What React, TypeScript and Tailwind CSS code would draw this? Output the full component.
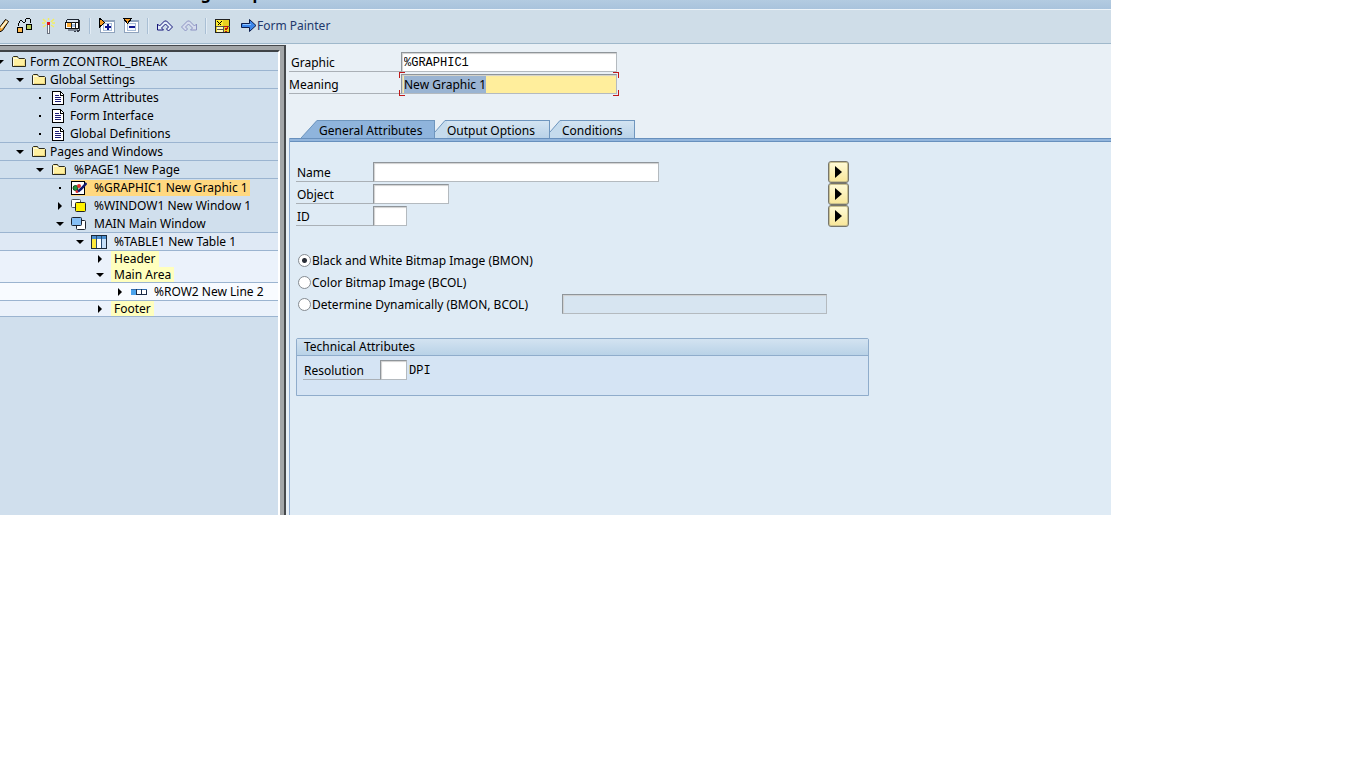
import React, { useEffect, useRef, useState } from 'react';
import clsx from 'clsx';

const PencilIcon = () => (
  <svg width="16" height="16" viewBox="0 0 16 16">
    <path d="M5.500 14.500l1-5 6-8 3 2-6 9z" fill="#f0a030" stroke="#000" />
    <path d="M8 10l6-7" stroke="#fff2c8" strokeWidth="2" />
  </svg>
);

const StructureIcon = () => (
  <svg width="16" height="16" viewBox="0 0 16 16" shapeRendering="crispEdges">
    <path d="M1 5h1v3H1zM2 3h1v2H2zM3 2h2v1H3zM5 3h1v1H5zM6 4h2v1H6zM8 1h1v3H8zM9 0h4v1H9zM13 1h1v4h-1z" fill="#000" />
    <rect x="0.500" y="9.500" width="5" height="5" fill="#ffb84d" stroke="#000" />
    <rect x="9.500" y="6.500" width="5" height="5" fill="#b5cc5c" stroke="#000" />
  </svg>
);

const WandIcon = () => (
  <svg width="16" height="16" viewBox="0 0 16 16">
    <path d="M2 1l3 3M13 1l-3 3M2 9l3-2M13 9l-3-2M1 5h3M11 5h3M7.500 0v2" stroke="#f4ee60" strokeWidth="1.500" />
    <rect x="6.500" y="6.500" width="2" height="9" fill="#fff" stroke="#6b7280" />
    <rect x="6" y="4" width="3" height="3" fill="#dd1515" />
  </svg>
);

const PrintPreviewIcon = () => (
  <svg width="16" height="16" viewBox="0 0 16 16" shapeRendering="crispEdges">
    <path d="M2.500 1.500h11v3h-12v-2z" fill="#dce6f2" stroke="#1c2430" />
    <rect x="0.500" y="4.500" width="13" height="6" fill="#fff" stroke="#111" />
    <rect x="2" y="5" width="4" height="4" fill="#ffad33" />
    <path d="M6 4h1v6H6zM10 4h1v6h-1z" fill="#222" />
    <rect x="7" y="6" width="3" height="3" fill="#a9c5e8" />
    <path d="M14 2h1v11h-1z" fill="#333a46" />
    <path d="M3 11h10v2H3z" fill="#7c8796" />
    <path d="M9 13h2v1H9zM12 12h2v2h-2z" fill="#333a46" />
  </svg>
);

const ExpandIcon = ({ collapse = false }: { collapse?: boolean }) => (
  <svg width="16" height="16" viewBox="0 0 16 16" shapeRendering="crispEdges">
    <rect x="1.500" y="2.500" width="14" height="12" fill="#fff" stroke="#8fa3bd" />
    <path d="M2 3h13" stroke="#8fa3bd" strokeWidth="2" />
    <rect x="4.500" y="5.500" width="8" height="7" fill="#f5f9ff" stroke="#a8bdd8" />
    {collapse ? (
      <path d="M0.500 0.500h8l-4 5z" fill="#f59a23" stroke="#000" strokeWidth="1" />
    ) : (
      <path d="M0.500 0v9l5-4.500z" fill="#f59a23" stroke="#000" strokeWidth="1" />
    )}
    <path d={collapse ? 'M6 9h6' : 'M6 9h6M9 6v6'} stroke="#101890" strokeWidth="2" />
  </svg>
);

const UndoIcon = ({ redo = false }: { redo?: boolean }) => (
  <svg width="16" height="16" viewBox="0 0 16 16">
    <path
      d={redo ? 'M15.500 6v6h-6l2-2-4-4-3 3 2 2-2 2-4-4 6-6h2l5 5z' : 'M0.500 6v6h6l-2-2 4-4 3 3-2 2 2 2 4-4-6-6h-2l-5 5z'}
      fill={redo ? '#d5dced' : '#e3edf8'}
      stroke={redo ? '#8c92c2' : '#141478'}
    />
  </svg>
);

const HelpTableIcon = () => (
  <svg width="16" height="16" viewBox="0 0 16 16" shapeRendering="crispEdges">
    <rect x="0.500" y="1.500" width="14" height="13" fill="#e8d020" stroke="#222" />
    <rect x="1" y="2" width="7" height="6" fill="#ffec30" />
    <path d="M2 3h1v1H2zM6 3h1v1H6zM3 4h1v1H3zM5 4h1v1H5zM4 5h1v1H4zM3 6h1v1H3zM5 6h1v1H5z" fill="#000" />
    <path d="M1 8h14v1H1zM8 8h1v6H8z" fill="#555" />
    <path d="M2 9h6v5H2z" fill="#fff8c0" />
    <path d="M2 11h6v1H2z" fill="#555" />
    <path d="M9 8h4v1H9zM12 9h1v2h-1zM10 10h2v2h-2zM10 13h2v1h-2z" fill="#c01010" />
  </svg>
);

const ArrowIcon = () => (
  <svg width="16" height="16" viewBox="0 0 16 16">
    <path d="M0.500 5.500h8v-4l6.500 6-6.500 6v-4h-8z" fill="#3c86ea" stroke="#0b1c4c" />
    <path d="M2 6.500h8" stroke="#8fc4ff" />
  </svg>
);

const FolderIcon = () => (
  <svg width="16" height="16" viewBox="0 0 16 16">
    <path d="M1.500 12.500v-9l1-1h4l1 2h6l1 1v7z" fill="#fff0a0" stroke="#2a2a20" />
    <path d="M2.500 4.500h5M2.500 4v8" stroke="#fffbe0" />
    <path d="M3 11.500h10.500V6" fill="none" stroke="#ecd67c" />
  </svg>
);

const DocIcon = () => (
  <svg width="16" height="16" viewBox="0 0 16 16" shapeRendering="crispEdges">
    <path d="M1.500 1.500h8l3 3v10h-11z" fill="#fff" stroke="#000" />
    <path d="M9.500 1v4H13" fill="none" stroke="#000" />
    <path d="M4 5.500h4M4 7.500h6M4 9.500h6M4 11.500h6" stroke="#1c1c78" />
  </svg>
);

const GraphicIcon = () => (
  <svg width="16" height="16" viewBox="0 0 16 16">
    <rect x="0.500" y="1.500" width="13" height="13" fill="#fff" stroke="#000" />
    <circle cx="4.500" cy="8" r="2.500" fill="#24943c" stroke="#114418" />
    <circle cx="8" cy="6" r="2" fill="#e03030" />
    <circle cx="6" cy="11.500" r="1.500" fill="#e03030" />
    <path d="M15.500 3l-5 5.500-3.500 3" stroke="#10186c" strokeWidth="2.500" fill="none" />
  </svg>
);

const WindowIcon = ({ main = false }: { main?: boolean }) => (
  <svg width="16" height="16" viewBox="0 0 16 16">
    {main ? (
      <>
        <rect x="5.500" y="4.500" width="9" height="9" rx="1" fill="#fff" stroke="#1d2430" />
        <rect x="0.500" y="1.500" width="10" height="8" rx="1" fill="#86bff5" stroke="#1d2430" />
      </>
    ) : (
      <>
        <rect x="0.500" y="1.500" width="9" height="8" rx="1" fill="#fff" stroke="#4a5560" />
        <rect x="4.500" y="4.500" width="10" height="9" rx="1" fill="#fff200" stroke="#222" />
      </>
    )}
  </svg>
);

const TableIcon = () => (
  <svg width="16" height="16" viewBox="0 0 16 16" shapeRendering="crispEdges">
    <rect x="0.500" y="1.500" width="15" height="13" fill="#fff" stroke="#1c2838" />
    <rect x="1" y="2" width="14" height="3" fill="#4a8fd0" />
    <rect x="1" y="5" width="4" height="9" fill="#ffe83c" />
    <rect x="11" y="5" width="4" height="9" fill="#c8e0f8" />
    <path d="M5.500 2v12M10.500 2v12" stroke="#2a4a70" />
  </svg>
);

const LineIcon = () => (
  <svg width="16" height="16" viewBox="0 0 16 16" shapeRendering="crispEdges">
    <rect x="0.500" y="5.500" width="15" height="5" fill="#fff" stroke="#1c2c48" />
    <rect x="0" y="5" width="5" height="6" fill="#4ca4ec" />
    <path d="M0 5h16v1H0z" fill="#3470b0" />
    <path d="M5.500 5v6M10.500 5v6" stroke="#1c2c48" />
  </svg>
);

type Marker = 'open' | 'closed' | 'leaf';

interface TreeNode {
  label: string;
  indent: string;
  marker: Marker;
  icon?: React.ReactNode;
  wide?: boolean;
  selected?: boolean;
  area?: boolean;
  row?: string;
}

const nodes: TreeNode[] = [
  { label: 'Form ZCONTROL_BREAK', indent: 'pl-0', marker: 'open', icon: <FolderIcon />, row: 'border-b' },
  { label: 'Global Settings', indent: 'pl-5', marker: 'open', icon: <FolderIcon />, row: 'border-b' },
  { label: 'Form Attributes', indent: 'pl-10', marker: 'leaf', icon: <DocIcon /> },
  { label: 'Form Interface', indent: 'pl-10', marker: 'leaf', icon: <DocIcon /> },
  { label: 'Global Definitions', indent: 'pl-10', marker: 'leaf', icon: <DocIcon />, row: 'border-b' },
  { label: 'Pages and Windows', indent: 'pl-5', marker: 'open', icon: <FolderIcon />, row: 'border-b' },
  { label: '%PAGE1 New Page', indent: 'pl-10', marker: 'open', icon: <FolderIcon />, wide: true, row: 'border-b' },
  { label: '%GRAPHIC1 New Graphic 1', indent: 'pl-15', marker: 'leaf', icon: <GraphicIcon />, wide: true, selected: true },
  { label: '%WINDOW1 New Window 1', indent: 'pl-15', marker: 'closed', icon: <WindowIcon />, wide: true },
  { label: 'MAIN Main Window', indent: 'pl-15', marker: 'open', icon: <WindowIcon main />, wide: true, row: 'border-b' },
  { label: '%TABLE1 New Table 1', indent: 'pl-20', marker: 'open', icon: <TableIcon />, wide: true, row: 'border-b bg-[#dfe9f5]' },
  { label: 'Header', indent: 'pl-25', marker: 'closed', area: true, row: 'bg-[#ebf2fb]' },
  { label: 'Main Area', indent: 'pl-25', marker: 'open', area: true, row: 'border-b bg-[#ebf2fb]' },
  { label: '%ROW2 New Line 2', indent: 'pl-30', marker: 'closed', icon: <LineIcon />, wide: true, row: 'border-b bg-[#f8fbff]' },
  { label: 'Footer', indent: 'pl-25', marker: 'closed', area: true, row: 'border-b bg-[#ebf2fb]' },
];

const markerPaths: Record<Marker, string> = {
  open: 'M0 2h8L4 6z',
  closed: 'M2 0l4 4-4 4z',
  leaf: 'M3 3h2v2H3z',
};

const TreeRow = ({ node }: { node: TreeNode }) => (
  <li className={clsx('flex items-center border-[#9bb4d0]', node.area ? 'h-4' : 'h-[18px]', node.indent, node.row)}>
    <svg className="-ml-1 mr-[7px] shrink-0" width="8" height="8" viewBox="0 0 8 8">
      <path d={markerPaths[node.marker]} fill="#000" />
    </svg>
    <span
      className={clsx(
        'flex items-center whitespace-nowrap',
        node.area && 'h-full bg-[#ffffbe] pr-[3px]',
        node.selected && 'h-4 bg-[#ffd880] pr-0.5',
      )}
    >
      {node.icon}
      <span className={node.wide ? 'pl-[7px]' : 'pl-[3px]'}>{node.label}</span>
    </span>
  </li>
);

const Separator = () => <span className="h-4 w-0.5 border-l border-[#a9bfd4] bg-[#e2ecf5]" />;

const field =
  'h-5 border border-[#b4babf] border-t-[#8f959a] border-l-[#8f959a] px-0.5 shadow-[inset_1px_1px_1px_#d0d0d0] outline-none';
const caption = 'flex h-5 shrink-0 items-center border-b border-[#aab0b6] pt-0.5';
const mono = "font-['Liberation_Mono',monospace] pt-0.5";

const MoreButton = ({ label }: { label: string }) => (
  <button
    aria-label={label}
    className="ml-auto flex h-[22px] w-[21px] items-center justify-center rounded-[3px] border border-[#77766c] bg-linear-to-b from-[#fffbd8] to-[#f8e698] shadow-[inset_0_0_0_1px_#c9c08e]"
  >
    <svg width="7" height="12" viewBox="0 0 7 12">
      <path d="M0 0l7 6-7 6z" fill="#000" />
    </svg>
  </button>
);

const attributes = [
  { id: 'name', label: 'Name', width: 'w-[286px]' },
  { id: 'object', label: 'Object', width: 'w-[76px]' },
  { id: 'gid', label: 'ID', width: 'w-[34px]' },
];

const bitmapTypes = ['Black and White Bitmap Image (BMON)', 'Color Bitmap Image (BCOL)', 'Determine Dynamically (BMON, BCOL)'];

const tabs = [
  { label: 'General Attributes', width: 'w-[116px]' },
  { label: 'Output Options', width: 'w-[103px]' },
  { label: 'Conditions', width: 'w-[73px]' },
];

export default function App() {
  const meaning = useRef<HTMLInputElement>(null);
  const [type, setType] = useState(0);
  const [tab, setTab] = useState(0);

  useEffect(() => {
    meaning.current?.focus();
    meaning.current?.select();
  }, []);

  return (
    <div className="min-h-screen bg-white font-['Noto_Sans',sans-serif] text-[12px] leading-4 text-black">
      <div className="mr-[253px] overflow-hidden bg-[#e9f0f6]">
        <header className="flex h-2.5 items-end overflow-hidden border-b border-[#eef4f9] bg-linear-to-b from-[#b3cbe1] to-[#a9c3dc] pl-40">
          <h1 className="pb-2 text-[16px] leading-4 font-bold">Change Graphic</h1>
        </header>

        <nav className="flex h-[34px] items-center gap-2 border-b border-[#9fb8cb] bg-[#cfdde8] pb-px">
          <button aria-label="Display/Change" className="-ml-[7px]"><PencilIcon /></button>
          <button aria-label="Other Object"><StructureIcon /></button>
          <button aria-label="Activate"><WandIcon /></button>
          <button aria-label="Test"><PrintPreviewIcon /></button>
          <Separator />
          <button aria-label="Expand"><ExpandIcon /></button>
          <button aria-label="Collapse"><ExpandIcon collapse /></button>
          <Separator />
          <button aria-label="Undo"><UndoIcon /></button>
          <button aria-label="Redo"><UndoIcon redo /></button>
          <Separator />
          <button aria-label="Field List"><HelpTableIcon /></button>
          <button className="ml-0.5 flex items-center text-[#22386c]">
            <ArrowIcon />
            Form Painter
          </button>
        </nav>

        <div className="flex">
          <aside className="mt-px flex w-[286px] shrink-0 border-t border-r-2 border-[#45484b]">
            <div className="flex flex-1 border-t-4 border-r-4 border-[#a3a6a8]">
              <div className="flex-1 border-t-2 border-r-2 border-t-[#3f4347] border-r-white bg-[#d0dfed] pt-px">
                <ul>
                  {nodes.map((node) => (
                    <TreeRow key={node.label} node={node} />
                  ))}
                </ul>
              </div>
            </div>
          </aside>

          <main className="min-w-0 flex-1 pt-2 pl-[3px]">
            <div className="flex h-[22px]">
              <label htmlFor="graphic" className={clsx(caption, 'w-28 pl-0.5')}>Graphic</label>
              <input id="graphic" defaultValue="%GRAPHIC1" className={clsx(field, mono, 'w-[216px] bg-white')} />
            </div>
            <div className="flex h-[22px]">
              <label htmlFor="meaning" className={clsx(caption, 'w-28')}>Meaning</label>
              <div className="relative h-5">
                <input
                  id="meaning"
                  ref={meaning}
                  defaultValue="New Graphic 1"
                  className={clsx(field, 'w-[216px] bg-[#ffee9c] selection:bg-[#9ab4d2] selection:text-black')}
                />
                <span className="absolute -top-0.5 -left-0.5 size-1.5 border-t border-l border-[#c01818]" />
                <span className="absolute -top-0.5 -right-0.5 size-1.5 border-t border-r border-[#c01818]" />
                <span className="absolute -bottom-0.5 -left-0.5 size-1.5 border-b border-l border-[#c01818]" />
                <span className="absolute -right-0.5 -bottom-0.5 size-1.5 border-r border-b border-[#c01818]" />
              </div>
            </div>

            <div role="tablist" className="mt-6 flex pl-3">
              {tabs.map((t, i) => (
                <button
                  key={t.label}
                  role="tab"
                  aria-selected={tab === i}
                  onClick={() => setTab(i)}
                  className="flex h-[18px]"
                >
                  <svg width={i === 0 ? 18 : 12} height="18" viewBox={i === 0 ? '0 0 18 18' : '0 0 12 18'}>
                    <path d={i === 0 ? 'M0 18L16 0h2v18z' : 'M0 18V12L10 0h2v18z'} fill={tab === i ? '#8fb4dc' : '#c5dbed'} />
                    <path d={i === 0 ? 'M0 18L16 0.500h2' : 'M0 12L10 0.500h2'} fill="none" stroke="#6f96be" />
                  </svg>
                  <span
                    className={clsx(
                      'flex h-full items-center border-t border-r border-[#6f96be] whitespace-nowrap pt-0.5',
                      t.width,
                      tab === i ? 'bg-[#8fb4dc]' : 'bg-linear-to-b from-[#d3e4f2] to-[#b9d2e8]',
                    )}
                  >
                    {t.label}
                  </span>
                </button>
              ))}
            </div>

            <section className="border-l border-[#8fabd0] bg-[#dfebf5] pb-[119px]">
              <div className="h-1 border-y border-[#6890bd] bg-[#92b5dc]" />
              <div className="w-[579px] pt-[19px] pl-1.5">
                <div className="w-[553px]">
                  {attributes.map((a) => (
                    <div key={a.id} className="flex h-[22px] items-center">
                      <label htmlFor={a.id} className={clsx(caption, 'w-[77px] pl-px')}>{a.label}</label>
                      <input id={a.id} className={clsx(field, 'bg-white', a.width)} />
                      <MoreButton label={`More ${a.label}`} />
                    </div>
                  ))}
                </div>

                <div className="mt-[22px] flex w-[531px] flex-col">
                  {bitmapTypes.map((label, i) => (
                    <div key={label} className="flex h-[22px] items-center">
                      <label className="flex items-center gap-px pl-0.5 whitespace-nowrap">
                        <input
                          type="radio"
                          name="bitmap"
                          checked={type === i}
                          onChange={() => setType(i)}
                          className="size-[13px] appearance-none rounded-full border border-[#858b91] bg-white checked:bg-[radial-gradient(circle,#2b2f38_0_2px,#ffffff_3px)]"
                        />
                        <span className="pt-0.5">{label}</span>
                      </label>
                      {i === 2 && (
                        <input disabled aria-label="Dynamic type" className={clsx(field, 'ml-auto w-[265px] bg-[#d7e5f1]')} />
                      )}
                    </div>
                  ))}
                </div>

                <fieldset className="mt-[23px] h-[58px] rounded-t-[2px] border border-[#8faccb] bg-[#d5e4f4]">
                  <h2 className="h-[17px] border-b border-[#8faccb] bg-linear-to-b from-[#d3e3f1] to-[#b9d2e7] pl-[7px]">
                    Technical Attributes
                  </h2>
                  <div className="mt-1 flex h-5 pl-1.5">
                    <label htmlFor="resolution" className={clsx(caption, 'w-[77px] pl-px')}>Resolution</label>
                    <input id="resolution" className={clsx(field, 'w-[27px] bg-white')} />
                    <span className={clsx(mono, 'flex items-center pl-0.5')}>DPI</span>
                  </div>
                </fieldset>
              </div>
            </section>
          </main>
        </div>
      </div>
    </div>
  );
}
